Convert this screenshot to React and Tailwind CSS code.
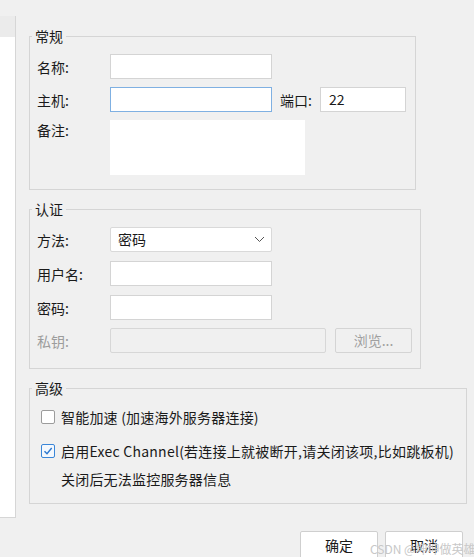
import React from 'react';

const Label = ({ children, className = '' }) => (
  <span className={`w-[73px] shrink-0 text-[14px] leading-[20px] ${className}`}>{children}</span>
);

const Field = ({ className = '', border = 'border-[#d4d4d4]', children }) => (
  <div className={`h-[25px] bg-white border ${border} flex items-center text-[14px] ${className}`}>
    {children}
  </div>
);

const CheckBox = ({ checked }) => (
  <span
    className={`w-[14px] h-[14px] shrink-0 rounded-[2px] border flex items-center justify-center ${
      checked ? 'border-[#3a86d8] bg-[#f4f8fd]' : 'border-[#9c9c9c] bg-white'
    }`}
  >
    {checked && (
      <svg width="10" height="10" viewBox="0 0 10 10">
        <polyline points="1.5,5.2 4,7.8 8.7,2" fill="none" stroke="#2c78cf" strokeWidth="1.4" />
      </svg>
    )}
  </span>
);

export default function App() {
  return (
    <div className="relative w-[474px] h-[557px] overflow-hidden bg-[#f0f0f0] flex text-[#1a1a1a] font-['Noto_Sans_CJK_SC','Noto_Sans',sans-serif]">
      {/* left list panel */}
      <div className="mt-[16px] h-[502px] w-[16px] shrink-0 flex flex-col bg-white border-r border-b border-[#d6d6d6]">
        <div className="h-[21px] bg-[#ebebeb]" />
      </div>

      <div className="ml-[13px] pt-[26px] flex flex-col">
        {/* 常规 */}
        <fieldset className="w-[387px] border border-[#d5d5d5] pt-[8px] pb-[14px]">
          <legend className="ml-[2px] px-[3px] text-[14px] leading-[20px]">常规</legend>
          <div className="pl-[7px] flex flex-col gap-[8px]">
            <div className="flex items-center">
              <Label>名称:</Label>
              <Field className="w-[162px]" />
            </div>
            <div className="flex items-center">
              <Label>主机:</Label>
              <Field className="w-[162px]" border="border-[#7fb0e2]" />
              <span className="ml-[8px] w-[40px] text-[14px] leading-[20px]">端口:</span>
              <Field className="w-[86px] pl-[8px]">22</Field>
            </div>
            <div className="flex items-start">
              <Label>备注:</Label>
              <div className="w-[195px] h-[55px] bg-white" />
            </div>
          </div>
        </fieldset>

        {/* 认证 */}
        <fieldset className="mt-[9px] w-[392px] border border-[#d5d5d5] pt-[8px] pb-[15px]">
          <legend className="ml-[2px] px-[3px] text-[14px] leading-[20px]">认证</legend>
          <div className="pl-[7px] flex flex-col">
            <div className="flex items-center">
              <Label>方法:</Label>
              <Field className="w-[162px] rounded-[2px] pl-[7px] pr-[6px] justify-between" border="border-[#d9d9d9]">
                <span>密码</span>
                <svg width="11" height="7" viewBox="0 0 11 7">
                  <polyline points="1,1 5.5,5.5 10,1" fill="none" stroke="#555" strokeWidth="1" />
                </svg>
              </Field>
            </div>
            <div className="mt-[9px] flex items-center">
              <Label>用户名:</Label>
              <Field className="w-[162px]" />
            </div>
            <div className="mt-[9px] flex items-center">
              <Label>密码:</Label>
              <Field className="w-[162px]" />
            </div>
            <div className="mt-[8px] flex items-center">
              <Label className="text-[#9c9c9c]">私钥:</Label>
              <div className="w-[216px] h-[25px] bg-[#f0f0f0] border border-[#d7d7d7] rounded-[2px]" />
              <button className="ml-[9px] w-[77px] h-[25px] rounded-[2px] border border-[#d4d4d4] bg-[#f0f0f0] text-[14px] text-[#a0a0a0]">
                浏览...
              </button>
            </div>
          </div>
        </fieldset>

        {/* 高级 */}
        <fieldset className="mt-[9px] w-[438px] border border-[#d5d5d5] pt-[9px] pb-[14px]">
          <legend className="ml-[2px] px-[3px] text-[14px] leading-[20px]">高级</legend>
          <div className="flex flex-col text-[14px] leading-[20px]">
            <div className="pl-[11px] h-[20px] flex items-center gap-[6px]">
              <CheckBox />
              <span className="tracking-[0.2px]">智能加速 (加速海外服务器连接)</span>
            </div>
            <div className="mt-[14px] pl-[11px] h-[20px] flex items-center gap-[6px] whitespace-nowrap">
              <CheckBox checked />
              <span className="tracking-[0.25px]">启用Exec Channel(若连接上就被断开,请关闭该项,比如跳板机)</span>
            </div>
            <div className="mt-[8px] pl-[31px] h-[20px] tracking-[0.2px]">关闭后无法监控服务器信息</div>
          </div>
        </fieldset>

        {/* buttons */}
        <div className="mt-[27px] w-[438px] pr-[4px] flex justify-end gap-[7px]">
          <button className="w-[78px] h-[30px] shrink-0 bg-white border border-[#cfcfcf] rounded-[2px] text-[14px] pb-[2px]">
            确定
          </button>
          <button className="w-[78px] h-[30px] shrink-0 bg-white border border-[#cfcfcf] rounded-[2px] text-[14px] pb-[2px]">
            取消
          </button>
        </div>
      </div>

      {/* watermark */}
      <div className="absolute left-[370px] top-[540px] text-[12px] text-[#c8c8c8] whitespace-nowrap pointer-events-none">
        CSDN @坤坤做英雄
      </div>
    </div>
  );
}
